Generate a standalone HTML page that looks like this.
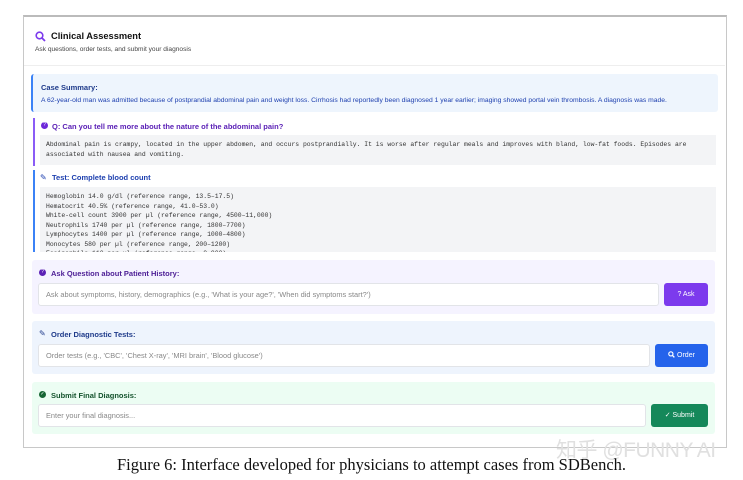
<!DOCTYPE html>
<html><head><meta charset="utf-8"><style>
body{margin:0;width:743px;height:480px;background:#fff;position:relative;font-family:"Liberation Sans",sans-serif;overflow:hidden}
.a{position:absolute;white-space:nowrap}
.frame{left:23px;top:15px;width:702px;height:430px;border:1px solid #c8c8c8;border-top:2px solid #bbb;background:#fff}
.mono{font-family:"Liberation Mono",monospace;font-size:6.4px;color:#333;line-height:9.5px;white-space:nowrap}
.inp{background:#fff;border:1px solid #e2e4e8;border-radius:3px;font-size:7.4px;color:#888;padding-left:7px;line-height:22px;box-sizing:border-box;height:23px}
.btn{color:#fff;font-size:7px;border-radius:3px;text-align:center;line-height:23px;height:23px}
.lbl{font-size:7.5px;font-weight:bold}
</style></head><body>
<div class="a frame"></div>
<div class="a" style="left:24px;top:65px;width:701px;height:1px;background:#eee"></div>
<svg class="a" style="left:35px;top:31px" width="11" height="11" viewBox="0 0 11 11"><circle cx="4.5" cy="4.5" r="3.3" stroke="#7c3aed" stroke-width="1.6" fill="none"/><path d="M7 7L10 10" stroke="#7c3aed" stroke-width="1.8"/></svg>
<div class="a" style="left:51px;top:31px;font-size:9.3px;font-weight:bold;color:#111">Clinical Assessment</div>
<div class="a" style="left:35px;top:46px;font-size:6.6px;color:#444">Ask questions, order tests, and submit your diagnosis</div>

<div class="a" style="left:31px;top:74px;width:685px;height:38px;background:#eef5fd;border-left:2px solid #3b82f6;border-radius:3px"></div>
<div class="a lbl" style="left:41px;top:83px;color:#1e3a8a">Case Summary:</div>
<div class="a" style="left:41px;top:97px;font-size:6.75px;color:#1e40af">A 62-year-old man was admitted because of postprandial abdominal pain and weight loss. Cirrhosis had reportedly been diagnosed 1 year earlier; imaging showed portal vein thrombosis. A diagnosis was made.</div>

<div class="a" style="left:33px;top:118px;width:2px;height:48px;background:#8b5cf6"></div>
<div class="a" style="left:41px;top:122px;width:7px;height:7px;border-radius:50%;background:#6d28d9;color:#fff;font-size:5px;text-align:center;line-height:7px">?</div>
<div class="a lbl" style="left:52px;top:122px;color:#5b21b6">Q: Can you tell me more about the nature of the abdominal pain?</div>
<div class="a" style="left:40px;top:135px;width:676px;height:30px;background:#f3f4f6"></div>
<div class="a mono" style="left:46px;top:140px">Abdominal pain is crampy, located in the upper abdomen, and occurs postprandially. It is worse after regular meals and improves with bland, low-fat foods. Episodes are<br>associated with nausea and vomiting.</div>

<div class="a" style="left:33px;top:170px;width:2px;height:82px;background:#3b82f6"></div>
<div class="a" style="left:40px;top:173px;font-size:8px;color:#1e40af">✎</div>
<div class="a lbl" style="left:52px;top:173px;color:#1e40af">Test: Complete blood count</div>
<div class="a" style="left:40px;top:187px;width:676px;height:65px;background:#f3f4f6;overflow:hidden"><div class="mono" style="padding:5px 6px">Hemoglobin 14.0 g/dl (reference range, 13.5–17.5)<br>Hematocrit 40.5% (reference range, 41.0–53.0)<br>White-cell count 3900 per µl (reference range, 4500–11,000)<br>Neutrophils 1740 per µl (reference range, 1800–7700)<br>Lymphocytes 1400 per µl (reference range, 1000–4800)<br>Monocytes 580 per µl (reference range, 200–1200)<br>Eosinophils 110 per µl (reference range, 0–900)</div></div>
<div class="a" style="left:24px;top:252px;width:701px;height:6px;background:#fff"></div>

<div class="a" style="left:32px;top:260px;width:683px;height:54px;background:#f5f3ff;border-radius:3px"></div>
<div class="a" style="left:39px;top:269px;width:7px;height:7px;border-radius:50%;background:#5b21b6;color:#fff;font-size:5px;text-align:center;line-height:7px">?</div>
<div class="a lbl" style="left:51px;top:269px;color:#4c1d95">Ask Question about Patient History:</div>
<div class="a inp" style="left:38px;top:283px;width:621px">Ask about symptoms, history, demographics (e.g., 'What is your age?', 'When did symptoms start?')</div>
<div class="a btn" style="left:664px;top:283px;width:44px;background:#7c3aed">? Ask</div>

<div class="a" style="left:32px;top:321px;width:683px;height:53px;background:#eef4fd;border-radius:3px"></div>
<div class="a" style="left:39px;top:329px;font-size:8px;color:#1e3a8a">✎</div>
<div class="a lbl" style="left:51px;top:330px;color:#1e3a8a">Order Diagnostic Tests:</div>
<div class="a inp" style="left:38px;top:344px;width:612px">Order tests (e.g., 'CBC', 'Chest X-ray', 'MRI brain', 'Blood glucose')</div>
<div class="a btn" style="left:655px;top:344px;width:53px;background:#2563eb"><svg width="7" height="7" viewBox="0 0 11 11" style="vertical-align:-1px"><circle cx="4.5" cy="4.5" r="3.3" stroke="#fff" stroke-width="1.8" fill="none"/><path d="M7 7L10 10" stroke="#fff" stroke-width="2"/></svg> Order</div>

<div class="a" style="left:32px;top:382px;width:683px;height:52px;background:#ecfdf3;border-radius:3px"></div>
<div class="a" style="left:39px;top:391px;width:7px;height:7px;border-radius:50%;background:#166534;color:#fff;font-size:5px;text-align:center;line-height:7px">✓</div>
<div class="a lbl" style="left:51px;top:391px;color:#14532d">Submit Final Diagnosis:</div>
<div class="a inp" style="left:38px;top:404px;width:608px">Enter your final diagnosis...</div>
<div class="a btn" style="left:651px;top:404px;width:57px;background:#15885a">✓ Submit</div>

<div class="a" style="left:556px;top:434px;font-size:21px;color:#e0e0e0;font-family:'Liberation Sans','Noto Sans CJK SC',sans-serif;letter-spacing:-0.5px">知乎 @FUNNY AI</div>
<div class="a" style="left:0;width:743px;top:455px;text-align:center;font-family:'Liberation Serif',serif;font-size:16.5px;color:#111">Figure 6: Interface developed for physicians to attempt cases from SDBench.</div>
</body></html>
